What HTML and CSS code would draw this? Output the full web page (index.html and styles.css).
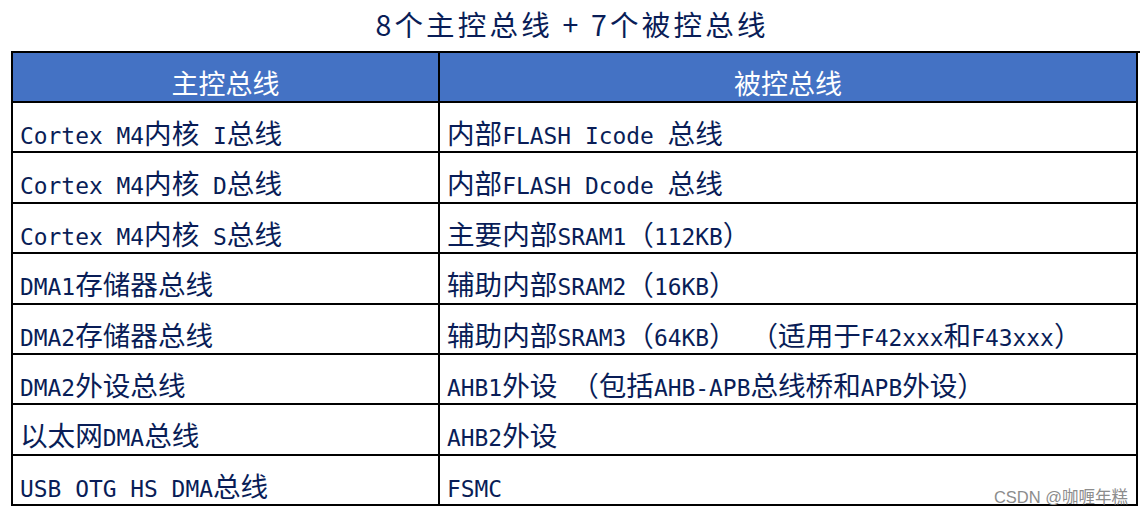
FILE: index.html
```html
<!DOCTYPE html>
<html lang="zh-CN">
<head>
<meta charset="utf-8">
<title>8个主控总线 + 7个被控总线</title>
<link rel="stylesheet" href="styles.css">
</head>
<body>
<div class="page">
  <h1 class="title">8个主控总线 + 7个被控总线</h1>
  <div class="bus-grid">
    <div class="cell head">主控总线</div>
    <div class="cell head">被控总线</div>

    <div class="cell"><span class="lat">Cortex M4</span>内核<span class="lat"> I</span>总线</div>
    <div class="cell">内部<span class="lat">FLASH Icode </span>总线</div>

    <div class="cell"><span class="lat">Cortex M4</span>内核<span class="lat"> D</span>总线</div>
    <div class="cell">内部<span class="lat">FLASH Dcode </span>总线</div>

    <div class="cell"><span class="lat">Cortex M4</span>内核<span class="lat"> S</span>总线</div>
    <div class="cell">主要内部<span class="lat">SRAM1</span>（<span class="lat">112KB</span>）</div>

    <div class="cell"><span class="lat">DMA1</span>存储器总线</div>
    <div class="cell">辅助内部<span class="lat">SRAM2</span>（<span class="lat">16KB</span>）</div>

    <div class="cell"><span class="lat">DMA2</span>存储器总线</div>
    <div class="cell">辅助内部<span class="lat">SRAM3</span>（<span class="lat">64KB</span>）<span class="lat"> </span>（适用于<span class="lat">F42xxx</span>和<span class="lat">F43xxx</span>）</div>

    <div class="cell"><span class="lat">DMA2</span>外设总线</div>
    <div class="cell"><span class="lat">AHB1</span>外设<span class="lat"> </span>（包括<span class="lat">AHB-APB</span>总线桥和<span class="lat">APB</span>外设）</div>

    <div class="cell">以太网<span class="lat">DMA</span>总线</div>
    <div class="cell"><span class="lat">AHB2</span>外设</div>

    <div class="cell"><span class="lat">USB OTG HS DMA</span>总线</div>
    <div class="cell"><span class="lat">FSMC</span></div>
  </div>
  <div class="watermark">CSDN @咖喱年糕</div>
</div>
</body>
</html>
```

FILE: styles.css
```css
html, body {
  margin: 0;
  padding: 0;
  background: #ffffff;
}

.page {
  position: relative;
  width: 1144px;
  height: 511px;
  overflow: hidden;
  font-family: "Noto Sans CJK SC", "DejaVu Sans", sans-serif;
}

.title {
  margin: 0;
  height: 51px;
  line-height: 48px;
  text-align: center;
  font-size: 28.5px;
  font-weight: 400;
  letter-spacing: 3.2px;
  color: #091d57;
}

.bus-grid {
  display: grid;
  grid-template-columns: 427px 698px;
  grid-template-rows: 50px repeat(8, 50.4px);
  width: 1127px;
  margin-left: 11px;
  border-top: 2px solid #000;
  border-left: 2px solid #000;
}

.cell {
  box-sizing: border-box;
  border-right: 2px solid #000;
  border-bottom: 2px solid #000;
  padding: 14px 0 0 7px;
  line-height: 30px;
  font-size: 27.6px;
  color: #091d57;
  white-space: nowrap;
}

.cell.head {
  background: #4472c4;
  color: #ffffff;
  text-align: center;
  padding: 15px 0 0 0;
  font-size: 27px;
}

.lat {
  font-family: "DejaVu Sans Mono", "Liberation Mono", monospace;
  font-size: 22.9px;
  white-space: pre;
}

.watermark {
  position: absolute;
  right: 16px;
  bottom: 4px;
  font-family: "Liberation Sans", "Noto Sans CJK SC", sans-serif;
  font-size: 16.5px;
  line-height: 20px;
  color: #8c8c8c;
}
```
